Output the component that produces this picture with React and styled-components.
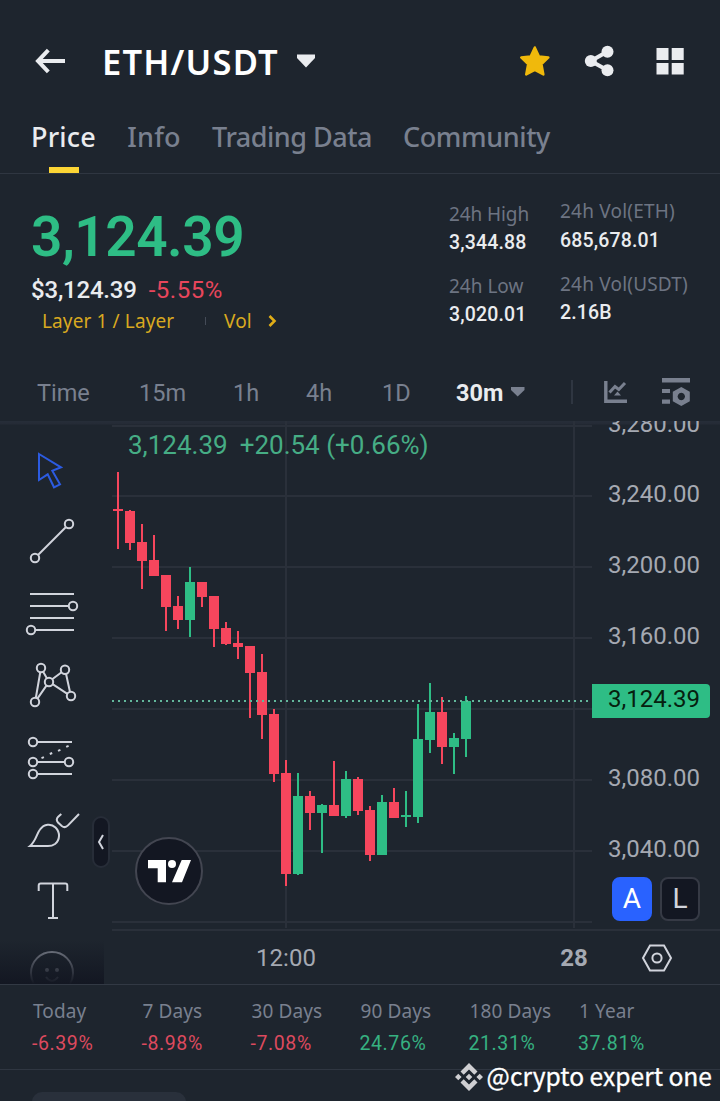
import React from 'react'
import styled, { createGlobalStyle } from 'styled-components'

const GlobalStyle = createGlobalStyle`
    * {
        box-sizing: border-box;
    }
    body {
        margin: 0;
        background: #1e252e;
    }
    svg {
        display: block;
    }
`

const UP = '#2ebd85'
const DOWN = '#f6465d'
const GRID = '#2a303a'
const TOOL = '#d1d4dc'

const Page = styled.div`
    position: relative;
    width: 720px;
    height: 1101px;
    overflow: hidden;
    background: #1e252e;
    color: #eaecef;
    font-family: 'Noto Sans', sans-serif;
    white-space: nowrap;
`

/* Header */
const HeaderBar = styled.header`
    display: flex;
    align-items: center;
    height: 122px;
    padding: 0 36px 0 35px;
`

const Title = styled.h1`
    width: 178px;
    margin: 0 15px 0 37px;
    padding-top: 2px;
    font-size: 34.5px;
    font-weight: 650;
    line-height: 40px;
    letter-spacing: 1.2px;
    color: #fff;
`

const HeaderIcons = styled.div`
    display: flex;
    align-items: center;
    gap: 34px;
    margin-left: auto;
`

/* Tabs */
const TabBar = styled.nav`
    display: flex;
    height: 52px;
    padding-left: 31px;
    border-bottom: 1px solid #2f3641;
`

const Tab = styled.span`
    display: flex;
    flex-direction: column;
    justify-content: space-between;
    align-items: center;
    width: ${({ $width }) => $width}px;
    margin-right: 31px;
    font-size: 27px;
    font-weight: 500;
    line-height: 30px;
    letter-spacing: ${({ $spacing }) => $spacing || 0}px;
    color: ${({ $active }) => ($active ? '#eaecef' : '#79808f')};
`

const TabMark = styled.i`
    width: 30px;
    height: 6px;
    background: #fcd535;
`

/* Ticker */
const Ticker = styled.section`
    display: flex;
    height: 188px;
    padding-left: 31px;
`

const LastPrice = styled.div`
    margin-top: 30px;
    font: 600 55px/66px Roboto, sans-serif;
    letter-spacing: -0.5px;
    color: ${UP};
`

const Quote = styled.div`
    display: flex;
    gap: 12px;
    margin-top: 5px;
    font: 500 24px/30px Roboto, sans-serif;
    letter-spacing: -0.2px;
`

const Change = styled.span`
    font-weight: 400;
    letter-spacing: 0.5px;
    color: #e8465c;
`

const Tags = styled.div`
    display: flex;
    align-items: center;
    height: 24px;
    margin-top: 4px;
    padding-left: 11px;
    font-size: 19px;
    line-height: 24px;
    color: #d9a920;
`

const TagText = styled.span`
    width: ${({ $width }) => $width}px;
    letter-spacing: 0.12px;
`

const TagDivider = styled.i`
    width: 1px;
    height: 8px;
    margin: 0 18px 0 30px;
    background: #444b57;
`

const PriceBox = styled.div`
    width: 418px;
`

const StatColumn = styled.div`
    width: 111px;
    padding-top: ${({ $top }) => $top}px;
`

const Stat = styled.div`
    height: ${({ $height }) => $height || 72}px;
`

const StatLabel = styled.div`
    font-size: 19px;
    line-height: 28px;
    letter-spacing: ${({ $spacing }) => $spacing || 0}px;
    color: #6d7482;
`

const StatValue = styled.div`
    padding-top: ${({ $drop }) => $drop || 1}px;
    font: 500 19.5px/28px Roboto, sans-serif;
    letter-spacing: 0.15px;
`

/* Interval selector */
const Intervals = styled.div`
    display: flex;
    align-items: center;
    height: 59px;
    padding-left: 37px;
    font: 400 23.5px/30px Roboto, sans-serif;
    color: #79808f;
`

const Interval = styled.span`
    width: ${({ $width }) => $width}px;
    padding-top: 2px;
    ${({ $active }) => $active && 'font-weight: 700; color: #eaecef;'}
`

const Divider = styled.i`
    width: 2px;
    height: 24px;
    margin: 0 31px 0 45px;
    background: #2f3641;
`

/* Chart */
const ChartArea = styled.section`
    position: relative;
    display: grid;
    grid-template-columns: 112px 480px 128px;
    grid-template-rows: 508px 55px;
    height: 564px;
    border-bottom: 1px solid #323944;
    background: linear-gradient(#262d38, #252b36 3px, transparent 4px);
    font-family: Roboto, sans-serif;
    overflow: hidden;
`

const Tools = styled.aside`
    position: relative;
    grid-row: 1 / 3;
    width: 104px;
    padding-top: 13px;
    overflow: hidden;
    &::after {
        content: '';
        position: absolute;
        left: 0;
        right: 0;
        bottom: 0;
        height: 44px;
        background: linear-gradient(rgba(19, 23, 34, 0), #131722);
    }
`

const ToolSvg = styled.svg`
    fill: none;
    stroke: ${({ $active }) => ($active ? '#2c5be0' : TOOL)};
    stroke-width: 2;
`

const Legend = styled.div`
    position: absolute;
    top: 9px;
    left: 128px;
    display: flex;
    gap: 12px;
    font-size: 26px;
    line-height: 30px;
    color: #46ad85;
`

const CollapseHandle = styled.div`
    position: absolute;
    top: 395px;
    left: 92px;
    display: flex;
    align-items: center;
    justify-content: center;
    width: 18px;
    height: 52px;
    border: 2px solid #272d38;
    border-radius: 9px;
    background: #131722;
`

const Badge = styled.div`
    position: absolute;
    top: 416px;
    left: 135px;
    display: flex;
    align-items: center;
    justify-content: center;
    width: 68px;
    height: 68px;
    border: 2px solid #434651;
    border-radius: 50%;
    background: #131722;
`

const PriceAxis = styled.div`
    position: relative;
    overflow: hidden;
    padding-left: 16px;
    font-size: 24px;
    color: #a5a9b2;
`

const AxisLabel = styled.div`
    height: 71px;
    line-height: 71px;
    &:first-child {
        margin-top: -33px;
        line-height: 73px;
    }
`

const CurrentPrice = styled.div`
    position: absolute;
    top: 263px;
    left: 0;
    width: 118px;
    height: 34px;
    padding-left: 16px;
    border-radius: 0 4px 4px 0;
    background: ${UP};
    font-size: 24px;
    line-height: 31px;
    color: #06200f;
`

const ScaleButtons = styled.div`
    position: absolute;
    top: 456px;
    left: 20px;
    display: flex;
    gap: 8px;
`

const ScaleButton = styled.span`
    width: 40px;
    height: 44px;
    border: 2px solid ${({ $active }) => ($active ? '#2962ff' : '#363a45')};
    border-radius: 8px;
    background: ${({ $active }) => ($active ? '#2962ff' : '#131722')};
    font-size: 28px;
    line-height: 40px;
    text-align: center;
    color: ${({ $active }) => ($active ? '#fff' : '#d1d4dc')};
`

const TimeAxis = styled.div`
    grid-column: 2 / 4;
    display: flex;
    align-items: center;
    border-top: 2px solid ${GRID};
    font-size: 24px;
    line-height: 30px;
    color: #a5a9b2;
`

const TimeLabel = styled.span`
    width: ${({ $width }) => $width}px;
    margin-left: ${({ $gap }) => $gap}px;
    text-align: center;
    font-weight: ${({ $bold }) => ($bold ? 700 : 400)};
`

/* Performance */
const Performance = styled.section`
    display: grid;
    grid-template-columns: 109.5px 109px 109px 109px 109.5px auto;
    height: 85px;
    padding: 12px 0 0 32px;
    border-bottom: 1px solid #2f3641;
`

const PerfLabel = styled.div`
    font-size: 19px;
    line-height: 28px;
    padding-left: 1px;
    letter-spacing: 0.1px;
    color: #79808f;
`

const PerfValue = styled.div`
    margin-top: 5px;
    font: 400 19.5px/28px Roboto, sans-serif;
    letter-spacing: 0.6px;
    color: ${({ $down }) => ($down ? '#dd4a5e' : '#36b181')};
`

const SheetPeek = styled.div`
    width: 154px;
    height: 30px;
    margin: 22px 0 0 32px;
    border-radius: 10px;
    background: #29303b;
`

const Signature = styled.div`
    position: absolute;
    right: 8px;
    bottom: 8px;
    display: flex;
    align-items: center;
    justify-content: space-between;
    width: 257px;
    height: 32px;
    font: 400 24.6px/32px 'Noto Sans CJK SC', sans-serif;
    color: #fff;
`

const SignatureName = styled.span`
    padding-bottom: 4px;
    -webkit-text-stroke: 0.3px #fff;
`

const intervals = [
    { label: 'Time', width: 102 },
    { label: '15m', width: 94 },
    { label: '1h', width: 73 },
    { label: '4h', width: 76 },
    { label: '1D', width: 74 }
]

const performance = [
    ['Today', '-6.39%'],
    ['7 Days', '-8.98%'],
    ['30 Days', '-7.08%'],
    ['90 Days', '24.76%'],
    ['180 Days', '21.31%'],
    ['1 Year', '37.81%']
]

const axisPrices = ['3,280.00', '3,240.00', '3,200.00', '3,160.00', '', '3,080.00', '3,040.00']

// wick top, body top, body bottom, wick bottom, rising
const candles = [
    [51, 88, 90, 128, 0],
    [89, 90, 122, 129, 0],
    [103, 121, 140, 168, 0],
    [114, 139, 155, 155, 0],
    [154, 154, 186, 210, 0],
    [175, 185, 199, 208, 0],
    [146, 161, 199, 216, 1],
    [161, 161, 176, 186, 0],
    [175, 175, 208, 226, 0],
    [201, 207, 223, 224, 0],
    [210, 222, 226, 238, 0],
    [225, 225, 252, 297, 0],
    [233, 251, 294, 318, 0],
    [288, 293, 353, 361, 0],
    [339, 352, 453, 465, 0],
    [352, 375, 453, 454, 1],
    [370, 375, 392, 409, 0],
    [383, 384, 392, 432, 1],
    [340, 384, 395, 395, 0],
    [350, 358, 395, 397, 1],
    [356, 358, 390, 394, 0],
    [385, 389, 434, 440, 0],
    [374, 381, 434, 434, 1],
    [367, 381, 397, 397, 0],
    [370, 394, 396, 406, 1],
    [283, 318, 396, 402, 1],
    [262, 291, 319, 332, 1],
    [276, 291, 326, 343, 0],
    [312, 317, 326, 353, 1],
    [275, 280, 318, 336, 1]
]

const CandleChart = () => (
    <svg width="480" height="508" viewBox="0 0 480 508">
        <g fill={GRID}>
            {[4, 74, 145, 216, 287, 358, 429, 500].map(y => (
                <rect key={y} x="0" y={y} width="480" height="2" />
            ))}
            <rect x="173" y="0" width="2" height="507" />
            <rect x="461" y="0" width="2" height="507" />
        </g>
        {candles.map(([high, top, bottom, low, rising], i) => (
            <g key={i} fill={rising ? UP : DOWN}>
                <rect x={5 + i * 12} y={high} width="2" height={low - high} />
                <rect x={1 + i * 12} y={top} width="10" height={bottom - top} />
            </g>
        ))}
        <path d="M0 280H480" stroke="#63b79c" strokeWidth="2" strokeDasharray="2 4" />
    </svg>
)

const toolIcons = [
    <path d="M39 20L61 33.3L52.3 36.7L60 50.3L54 53.3L47.7 40.3L39 46Z" />,
    <>
        <circle cx="69" cy="18" r="4.2" />
        <circle cx="35" cy="52" r="4.2" />
        <path d="M38 49L66 21" />
    </>,
    <>
        <path d="M30 16H74M30 28H69M30 40H74M35 52H74" />
        <circle cx="73" cy="28" r="4.2" />
        <circle cx="31" cy="52" r="4.2" />
    </>,
    <>
        <circle cx="41" cy="18" r="4.2" />
        <circle cx="65" cy="19.7" r="4.2" />
        <circle cx="49" cy="32" r="4.2" />
        <circle cx="71" cy="46" r="4.2" />
        <circle cx="35" cy="52" r="4.2" />
        <path d="M40.3 22L35.8 48M43 21.6L47 28.4M46.6 35.4L37.4 48.6M52.2 29.2L61.6 22.2M66 23.7L70 42M52.6 34.2L67.4 43.8" />
    </>,
    <>
        <path d="M37 20H72M37 40H65M37 52H72" />
        <circle cx="33" cy="20" r="4.2" />
        <circle cx="33" cy="40" r="4.2" />
        <circle cx="69" cy="40" r="4.2" />
        <circle cx="33" cy="52" r="4.2" />
        <path d="M41.5 36.2l2.4-1M49.8 32l2.4-1M58 28.8l2.4-1M66.2 24.8l2.4-1" />
    </>,
    <>
        <path d="M30 52C36 47 36.5 40 40 35.5C44 30 51 29 55.5 33.5C60.5 38.5 60 46 55 50Q52 52 48 52Z" />
        <path d="M61.3 20L58.2 22.8Q55.5 25.5 58 28.6L61.8 32Q65 34.6 68 31.4L79 20" />
    </>,
    <path d="M38.7 25V19.5Q38.7 17.5 40.7 17.5H65.3Q67.3 17.5 67.3 19.5V25M53 17.5V52M48 52H58" />,
    <g stroke="#858a95">
        <circle cx="52" cy="35" r="21" />
        <circle cx="47" cy="32" r="1" />
        <circle cx="57" cy="32" r="1" />
        <path d="M46 39Q52 47 58 39" />
    </g>
]

const App = () => (
    <Page>
        <GlobalStyle />
        <HeaderBar>
            <svg width="30" height="26" viewBox="0 0 30 26" fill="none" stroke="#eaecef" strokeWidth="4">
                <path d="M2 13H30M13.3 2.2L3 13L13.3 23.8" />
            </svg>
            <Title>ETH/USDT</Title>
            <svg width="22" height="16" viewBox="0 0 22 16">
                <path d="M2 1.5H20V5L11 14.5L2 5Z" fill="#eaecef" />
            </svg>
            <HeaderIcons>
                <svg width="31" height="32" viewBox="0 0 31 32">
                    <path
                        d="M15.8 2.4L20 11.4L29.4 12.5L22.5 19.2L24.4 29.5L15.8 25L7.2 29.5L9.1 19.2L2.2 12.5L11.6 11.4Z"
                        fill="#f0b90b" stroke="#f0b90b" strokeWidth="2.4" strokeLinejoin="round"
                    />
                </svg>
                <svg width="30" height="32" viewBox="0 0 30 32" fill="#eaecef">
                    <path d="M6.8 16L23.5 6.5M6.8 16L23.5 25.3" stroke="#eaecef" strokeWidth="4" />
                    <circle cx="6.8" cy="16" r="6" />
                    <circle cx="23.5" cy="6.7" r="6" />
                    <circle cx="23.5" cy="25.3" r="6" />
                </svg>
                <svg width="36" height="28" viewBox="0 0 36 28" fill="#eaecef">
                    <path d="M8.5 1h12v12h-12zM23.7 1h12v12h-12zM8.5 16h12v11.5h-12zM23.7 16h12v11.5h-12z" />
                </svg>
            </HeaderIcons>
        </HeaderBar>
        <TabBar>
            <Tab $width={65} $spacing={0.2} $active>Price<TabMark /></Tab>
            <Tab $width={54} $spacing={0.2}>Info</Tab>
            <Tab $width={160} $spacing={-0.5}>Trading Data</Tab>
            <Tab $width={147} $spacing={-0.4}>Community</Tab>
        </TabBar>

        <Ticker>
            <PriceBox>
                <LastPrice>3,124.39</LastPrice>
                <Quote>
                    <span>$3,124.39</span>
                    <Change>-5.55%</Change>
                </Quote>
                <Tags>
                    <TagText $width={133}>Layer 1 / Layer</TagText>
                    <TagDivider />
                    <TagText $width={44}>Vol</TagText>
                    <svg width="9" height="12" viewBox="0 0 9 12" fill="none" stroke="#e0ad17" strokeWidth="2.6">
                        <path d="M1.5 1L6.5 6L1.5 11" />
                    </svg>
                </Tags>
            </PriceBox>
            <StatColumn $top={26}>
                <Stat>
                    <StatLabel $spacing={-0.1}>24h High</StatLabel>
                    <StatValue>3,344.88</StatValue>
                </Stat>
                <Stat>
                    <StatLabel>24h Low</StatLabel>
                    <StatValue>3,020.01</StatValue>
                </Stat>
            </StatColumn>
            <StatColumn $top={23}>
                <Stat $height={73}>
                    <StatLabel $spacing={0.2}>24h Vol(ETH)</StatLabel>
                    <StatValue $drop={2}>685,678.01</StatValue>
                </Stat>
                <Stat>
                    <StatLabel $spacing={0.2}>24h Vol(USDT)</StatLabel>
                    <StatValue>2.16B</StatValue>
                </Stat>
            </StatColumn>
        </Ticker>

        <Intervals>
            {intervals.map(({ label, width }) => (
                <Interval key={label} $width={width}>{label}</Interval>
            ))}
            <Interval $width={54} $active>30m</Interval>
            <svg width="16" height="12" viewBox="0 0 16 12">
                <path d="M1 1H14.5V4L7.7 10.5L1 4Z" fill="#79808f" />
            </svg>
            <Divider />
            <svg width="24" height="24" viewBox="0 0 24 24" fill="none" stroke="#79808f">
                <path d="M1.8 1V21.2H23" strokeWidth="3.4" />
                <path d="M5.5 12.5L11 6.5L14.8 9.5L21 3" strokeWidth="3" />
                <path d="M10 15.5L13.5 11.5L17 15.5Z" fill="#79808f" stroke="none" />
            </svg>
            <svg width="64" height="30" viewBox="0 0 64 30" fill="#79808f">
                <path d="M34 1h28v4.4H34zM34 12h8v4H34zM34 22.6h8v4.2H34z" />
                <path fillRule="evenodd" d="M53.3 10L61.8 14.8V24.2L53.3 29L44.8 24.2V14.8ZM53.3 15.8a3.7 3.7 0 1 0 .01 0Z" />
            </svg>
        </Intervals>

        <ChartArea>
            <Tools>
                {toolIcons.map((icon, i) => (
                    <ToolSvg key={i} width="104" height="72" viewBox="0 0 104 72" $active={i === 0}>
                        {icon}
                    </ToolSvg>
                ))}
            </Tools>
            <CandleChart />
            <PriceAxis>
                {axisPrices.map((price, i) => (
                    <AxisLabel key={i}>{price}</AxisLabel>
                ))}
                <CurrentPrice>3,124.39</CurrentPrice>
                <ScaleButtons>
                    <ScaleButton $active>A</ScaleButton>
                    <ScaleButton>L</ScaleButton>
                </ScaleButtons>
            </PriceAxis>
            <TimeAxis>
                <TimeLabel $width={80} $gap={134}>12:00</TimeLabel>
                <TimeLabel $width={40} $gap={228} $bold>28</TimeLabel>
                <svg width="80" height="30" viewBox="0 0 80 30" fill="none" stroke={TOOL} strokeWidth="2">
                    <path d="M56 2.5H70L77 15L70 27.5H56L49 15Z" />
                    <circle cx="63" cy="15" r="4.6" />
                </svg>
            </TimeAxis>
            <Legend>
                <span>3,124.39</span>
                <span>+20.54 (+0.66%)</span>
            </Legend>
            <CollapseHandle>
                <svg width="8" height="16" viewBox="0 0 8 16" fill="none" stroke={TOOL} strokeWidth="2">
                    <path d="M6 1L2 8L6 15" />
                </svg>
            </CollapseHandle>
            <Badge>
                <svg width="44" height="24" viewBox="0 0 44 24" fill="#fff">
                    <path d="M1 1H19V23.3H10.7V9.3H1ZM34.7 1H44L35 23.3H25Z" />
                    <circle cx="25" cy="5" r="4" />
                </svg>
            </Badge>
        </ChartArea>

        <Performance>
            {performance.map(([label, value]) => (
                <div key={label}>
                    <PerfLabel>{label}</PerfLabel>
                    <PerfValue $down={value.startsWith('-')}>{value}</PerfValue>
                </div>
            ))}
        </Performance>
        <SheetPeek />

        <Signature>
            <svg width="28" height="28" viewBox="0 0 28 28" fill="#cfcfd2">
                <path d="M14 0L22.5 8.5L19.3 11.7L14 6.4L8.7 11.7L5.5 8.5ZM14 28L22.5 19.5L19.3 16.3L14 21.6L8.7 16.3L5.5 19.5Z" />
                <path d="M14 10.7L17.3 14L14 17.3L10.7 14ZM3.3 10.7L6.6 14L3.3 17.3L0 14ZM24.7 10.7L28 14L24.7 17.3L21.4 14Z" />
            </svg>
            <SignatureName>@crypto expert one</SignatureName>
        </Signature>
    </Page>
)

export default App
